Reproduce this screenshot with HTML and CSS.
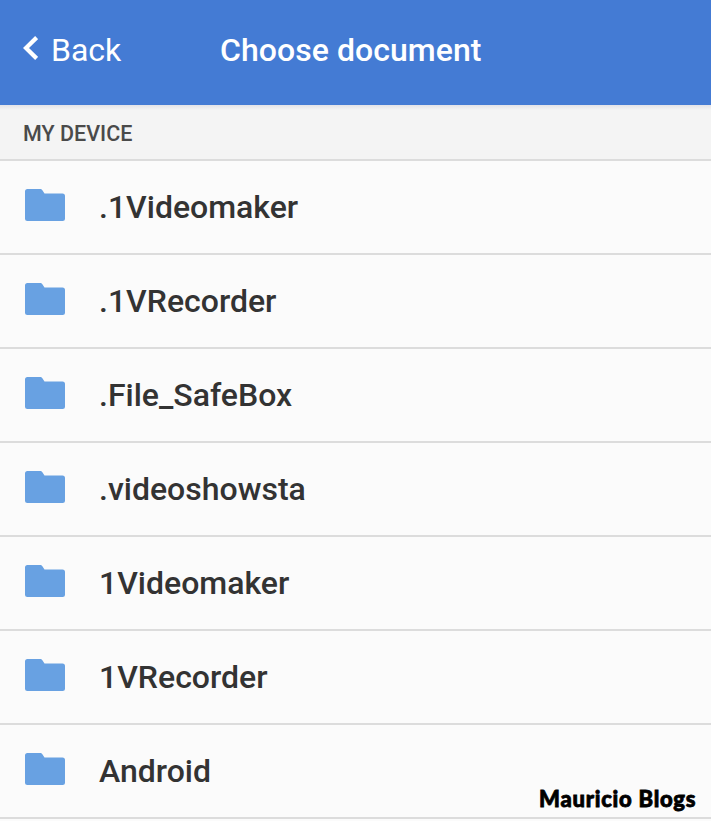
FILE: index.html
```html
<!DOCTYPE html>
<html lang="en">
<head>
<meta charset="UTF-8">
<meta name="viewport" content="width=device-width, initial-scale=1.0">
<title>Choose document</title>
<link rel="stylesheet" href="styles.css">
</head>
<body>

<svg class="defs" width="0" height="0">
<symbol id="folder" viewBox="0 0 40 32">
<path d="M2.5 0H15.5Q16.5 0 17.2 1L19.5 4.500H37.5Q40 4.500 40 7V29.500Q40 32 37.500 32H2.500Q0 32 0 29.500V2.500Q0 0 2.500 0Z"/>
</symbol>
</svg>

<header class="bar">
<a class="back">
<svg class="chevron" viewBox="0 0 15 24"><path d="M13.600 1.600L3 12L13.600 22.400"/></svg>
<span>Back</span>
</a>
<h1>Choose document</h1>
</header>

<h2 class="section">MY DEVICE</h2>

<ul class="files">
<li><svg class="folder"><use href="#folder"/></svg><span>.1Videomaker</span></li>
<li><svg class="folder"><use href="#folder"/></svg><span>.1VRecorder</span></li>
<li><svg class="folder"><use href="#folder"/></svg><span>.File_SafeBox</span></li>
<li><svg class="folder"><use href="#folder"/></svg><span>.videoshowsta</span></li>
<li><svg class="folder"><use href="#folder"/></svg><span>1Videomaker</span></li>
<li><svg class="folder"><use href="#folder"/></svg><span>1VRecorder</span></li>
<li><svg class="folder"><use href="#folder"/></svg><span>Android</span></li>
</ul>

<div class="credit">Mauricio Blogs</div>

</body>
</html>
```

FILE: styles.css
```css
* {
box-sizing: border-box;
}
body {
font-family: Roboto, sans-serif;
background: #fbfbfb;
color: #333;
margin: 0;
height: 821px;
overflow: hidden;
position: relative;
}
.defs {
display: block;
}
.bar {
display: flex;
align-items: center;
height: 105px;
padding: 0 23px 5px;
background: #447bd4;
color: #fff;
}
.back {
display: flex;
align-items: center;
width: 197px;
font-size: 32px;
}
.chevron {
width: 15px;
height: 24px;
margin-right: 13px;
margin-top: -4px;
fill: none;
stroke: #fff;
stroke-width: 4.2;
}
h1 {
margin: 0;
font-size: 32px;
font-weight: 500;
letter-spacing: 0.05px;
}
.section {
margin: 0;
height: 56px;
padding: 1px 0 0 23px;
line-height: 55px;
font-size: 21.5px;
font-weight: 500;
color: #4a4a4a;
background: linear-gradient(#e2e2e8, #f4f4f4 5px);
border-bottom: 2px solid #dcdcdc;
}
.files {
list-style: none;
margin: 0;
padding: 0;
}
.files li {
display: flex;
align-items: center;
height: 94px;
padding-left: 25px;
border-bottom: 2px solid #dcdcdc;
font-size: 32px;
font-weight: 500;
}
.folder {
width: 40px;
height: 32px;
margin-right: 34px;
margin-top: -4px;
fill: #68a1e2;
}
.credit {
position: absolute;
left: 539px;
top: 786px;
font-family: Lato, sans-serif;
font-size: 22px;
font-weight: 900;
line-height: 26px;
letter-spacing: 0.75px;
color: #000;
-webkit-text-stroke: 0.8px #000;
white-space: nowrap;
}
```
